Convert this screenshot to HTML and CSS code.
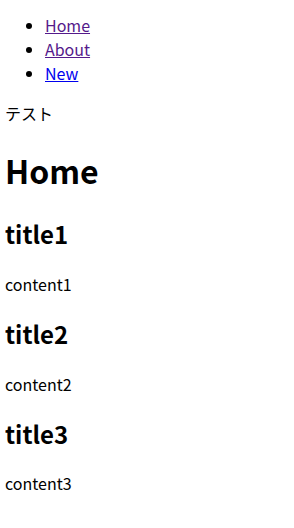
FILE: index.html
```html
<!doctype html>
<html lang="ja">
<head>
  <meta charset="UTF-8">
  <title>Home</title>
  <link rel="stylesheet" href="styles.css">
</head>
<body>
<ul class="nav">
  <li><a class="visited" href="#">Home</a></li>
  <li><a class="visited" href="#">About</a></li>
  <li><a href="#">New</a></li>
</ul>
<p>テスト</p>
<h1>Home</h1>
<section>
  <h2>title1</h2>
  <p>content1</p>
  <h2>title2</h2>
  <p>content2</p>
  <h2>title3</h2>
  <p>content3</p>
</section>
</body>
</html>
```

FILE: styles.css
```css
body {
  margin: 0 5px;
  background: #fff;
  color: #000;
  font-family: "Noto Sans CJK JP", "Noto Sans", sans-serif;
  font-size: 16px;
  line-height: 1.5;
}

.nav {
  margin: 13px 0 16px;
  padding-left: 40px;
}

a {
  color: #0000ee;
}

a.visited {
  color: #551a8b;
}

h1 {
  font-size: 32px;
  margin: 21.44px 0;
}

h2 {
  font-size: 24px;
  margin: 19.92px 0;
}

p {
  margin: 16px 0;
}
```
